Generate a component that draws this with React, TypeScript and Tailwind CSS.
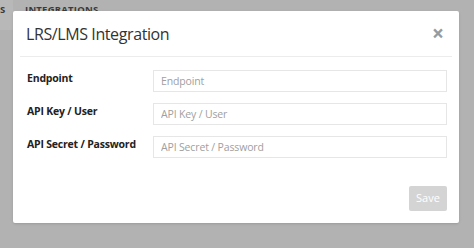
import React from "react";

const fields = [
  { label: "Endpoint", placeholder: "Endpoint" },
  { label: "API Key / User", placeholder: "API Key / User" },
  { label: "API Secret / Password", placeholder: "API Secret / Password" },
];

export default function App() {
  return (
    <div
      className="relative w-[474px] h-[248px] overflow-hidden bg-[#b2b2b2]"
      style={{ fontFamily: '"Open Sans", "Liberation Sans", sans-serif' }}
    >
      {/* page behind the overlay */}
      <div className="flex items-start h-[30px] text-[9.5px] font-bold text-[#3a3a3a] tracking-wide">
        <div className="w-[13px] h-full bg-[#b8b8b8] pt-[3px]">S</div>
        <div className="pl-[12px] pt-[3px]">INTEGRATIONS</div>
      </div>

      {/* modal */}
      <div className="absolute left-[13px] top-[11px] w-[446px] h-[212px] bg-white rounded-[2px] shadow-sm flex flex-col">
        <div className="flex items-center justify-between h-[45px] pl-[13px] pr-[15px]">
          <h2 className="text-[16px] tracking-[-0.4px] text-[#333] font-normal pt-[1px]">
            LRS/LMS Integration
          </h2>
          <button className="text-[#9a9a9a] text-[21px] font-bold leading-none pb-[1px]">×</button>
        </div>
        <div className="mx-[7px] border-b border-[#ececec]" />

        <div className="flex flex-col gap-[11px] pt-[13px] pl-[14px] pr-[12px]">
          {fields.map((f) => (
            <div key={f.label} className="flex items-center h-[22px]">
              <label className="w-[126px] text-[10.5px] tracking-[-0.2px] font-bold text-[#222] -mt-[5px]">
                {f.label}
              </label>
              <input
                placeholder={f.placeholder}
                className="flex-1 h-[22px] border border-[#e6e6e6] px-[7px] text-[10.5px] tracking-[-0.15px] text-[#333] placeholder:text-[#a0a0a0] outline-none"
              />
            </div>
          ))}
        </div>

        <div className="flex justify-end mt-auto mb-[12px] pr-[12px]">
          <button className="w-[38px] h-[25px] rounded-[2px] bg-[#d4d4d4] text-white text-[11px]">
            Save
          </button>
        </div>
      </div>
    </div>
  );
}
